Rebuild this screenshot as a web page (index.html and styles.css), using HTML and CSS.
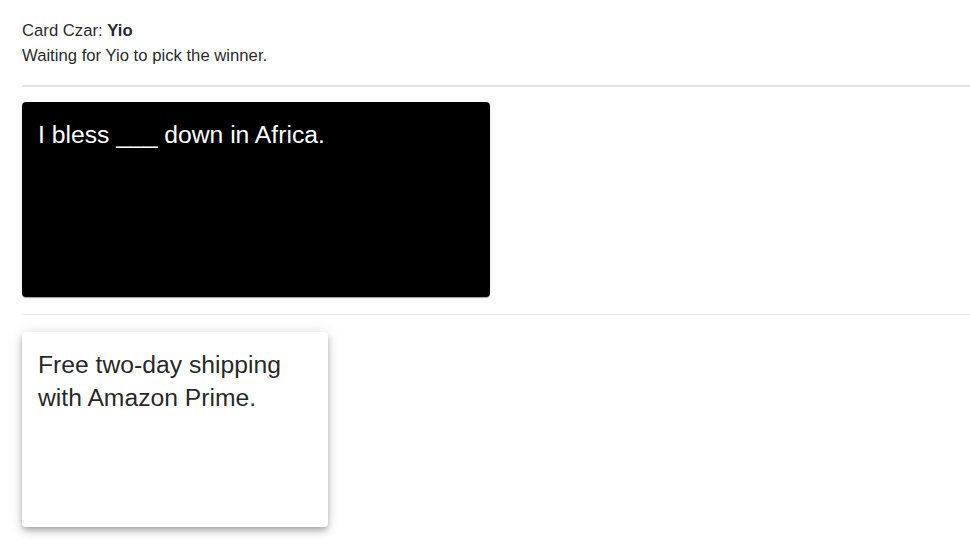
FILE: index.html
```html
<!DOCTYPE html>
<html lang="en">
<head>
    <meta charset="UTF-8">
    <meta name="viewport" content="width=device-width, initial-scale=1.0">
    <title>Card Czar</title>
    <link rel="stylesheet" href="styles.css">
</head>
<body>
    <div class="game">
        <div class="status">
            <div>Card Czar: <strong>Yio</strong></div>
            <div>Waiting for Yio to pick the winner.</div>
        </div>
        <hr class="divider">
        <div class="card card-black">
            I bless ___ down in Africa.
        </div>
        <hr class="divider light">
        <div class="card card-white">
            Free two-day shipping with Amazon Prime.
        </div>
    </div>
</body>
</html>
```

FILE: styles.css
```css
* {
    margin: 0;
    padding: 0;
    box-sizing: border-box;
}

body {
    background: #fff;
    color: rgba(0, 0, 0, 0.87);
    font-family: 'Liberation Sans', Arial, sans-serif;
}

.game {
    padding: 18px 0 24px 22px;
}

.status {
    font-size: 16.7px;
    line-height: 25px;
}

.status strong {
    font-weight: bold;
}

.divider {
    border: none;
    height: 2px;
    background: #e3e3e3;
    margin: 17px 0 15px;
}

.divider.light {
    height: 1px;
    background: #ececec;
    margin: 17px 0 17px;
}

.card {
    height: 195px;
    padding: 16px;
    border-radius: 4px;
    font-size: 24.7px;
    line-height: 33px;
    box-shadow: 0 2px 1px -1px rgba(0, 0, 0, 0.2),
                0 1px 1px 0 rgba(0, 0, 0, 0.14),
                0 1px 3px 0 rgba(0, 0, 0, 0.12);
}

.card-black {
    width: 468px;
    background: #000;
    color: #fff;
}

.card-white {
    width: 306px;
    background: #fff;
    color: rgba(0, 0, 0, 0.87);
    box-shadow: 0 3px 5px -1px rgba(0, 0, 0, 0.2),
                0 5px 8px 0 rgba(0, 0, 0, 0.14),
                0 1px 14px 0 rgba(0, 0, 0, 0.12);
}
```
